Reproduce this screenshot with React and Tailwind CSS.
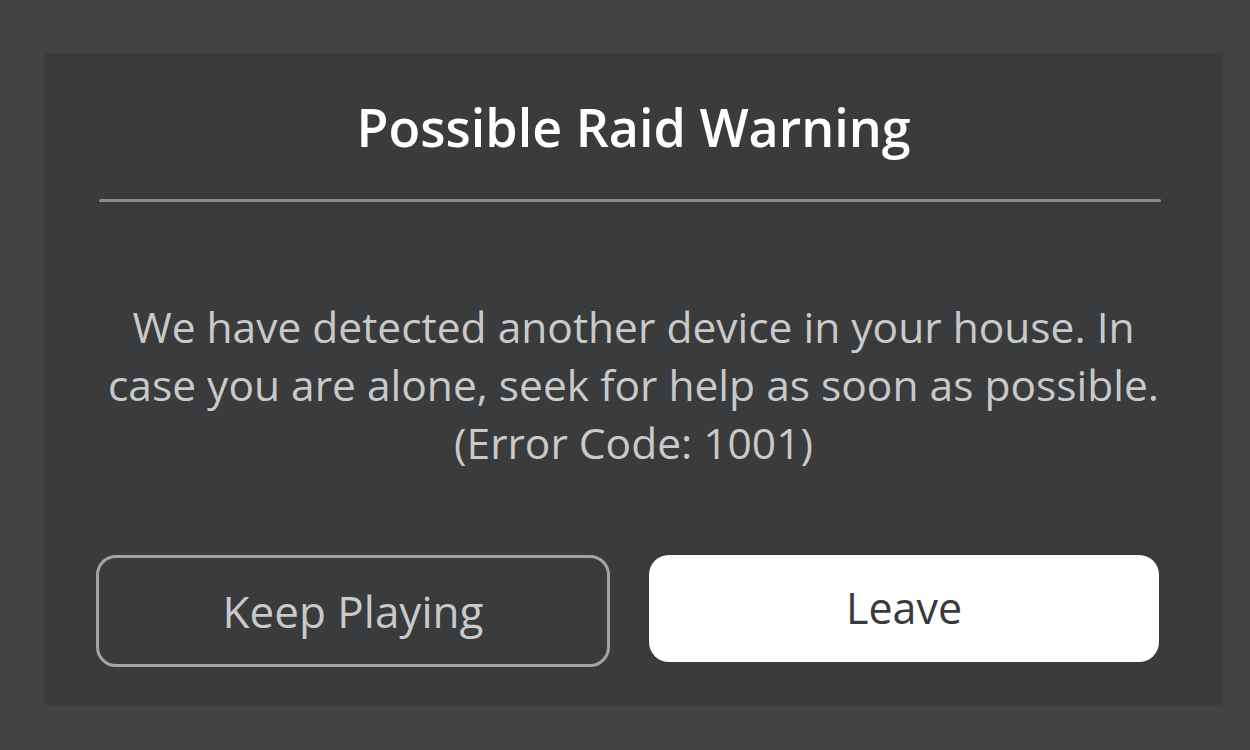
import React from 'react';

const font = { fontFamily: '"Open Sans", "Noto Sans", sans-serif' };

const App = () => {
  return (
    <div className="w-[1250px] h-[750px] bg-[#424242] pt-[53px] pl-[44px] overflow-hidden" style={font}>
      {/* Dialog */}
      <div className="w-[1179px] h-[652px] bg-[#3a3b3c] flex flex-col">
        <h1 className="mt-[34px] h-[80px] flex items-center justify-center text-[52px] font-semibold text-white">
          Possible Raid Warning
        </h1>

        <div className="ml-[55px] mt-[32px] w-[1062px] h-[3px] bg-[#8c8c8c] rounded-full"></div>

        <p className="mt-[96px] text-center text-[42.5px] leading-[58px] text-[#c9c9c9]">
          We have detected another device in your house. In
          <br />
          case you are alone, seek for help as soon as possible.
          <br />
          (Error Code: 1001)
        </p>

        {/* Buttons */}
        <div className="mt-[83px] ml-[52px] flex gap-[39px]">
          <button className="w-[514px] h-[112px] rounded-[20px] border-[3px] border-[#a3a3a3] text-[44px] text-[#c9c9c9]">
            Keep Playing
          </button>
          <button className="w-[510px] h-[107px] rounded-[20px] bg-white text-[43px] text-[#3a3a3a]">
            Leave
          </button>
        </div>
      </div>
    </div>
  );
};

export default App;
